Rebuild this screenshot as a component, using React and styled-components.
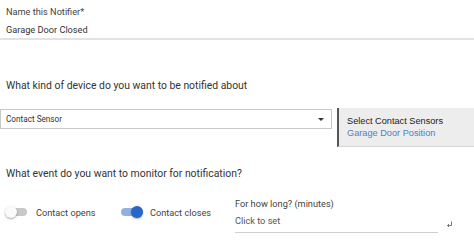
import React from "react";
import styled, { createGlobalStyle } from "styled-components";

const Global = createGlobalStyle`
  html, body { margin: 0; padding: 0; background: #fff; }
  body { font-family: Roboto, "Liberation Sans", sans-serif; color: #333; }
`;

const Page = styled.div`
  width: 474px;
  height: 241px;
  overflow: hidden;
  display: flex;
  flex-direction: column;
`;

const Field = styled.div`
  display: flex;
  flex-direction: column;
  padding: 6px 0 2px 6px;
  border-bottom: 2px solid #e2e2e2;
  margin-bottom: 39px;
`;

const FieldLabel = styled.div`
  font-size: 9.2px;
  color: #444;
  line-height: 12px;
`;

const FieldValue = styled.div`
  font-size: 9.2px;
  color: ${(p) => (p.$muted ? "#555" : "#333")};
  line-height: 12px;
  padding-top: ${(p) => (p.$tight ? 5 : 6)}px;
`;

const Heading = styled.div`
  font-size: 10.4px;
  color: #333;
  padding-left: 6px;
  line-height: 14px;
  margin-top: ${(p) => p.$mt || 0}px;
  margin-bottom: ${(p) => p.$mb || 0}px;
`;

const DeviceRow = styled.div`
  display: flex;
  align-items: flex-start;
  gap: 5px;
`;

const Select = styled.div`
  width: 332px;
  height: 20px;
  border: 1px solid #c8c8c8;
  box-sizing: border-box;
  margin-top: 1px;
  display: flex;
  align-items: center;
  justify-content: space-between;
  padding: 0 7px 0 5px;
  font-size: 8.2px;
  color: #333;
`;

const Caret = styled.span`
  width: 0;
  height: 0;
  border-left: 3px solid transparent;
  border-right: 3px solid transparent;
  border-top: 3px solid #333;
`;

const Picker = styled.div`
  flex: 1;
  height: 39px;
  background: #ededed;
  border-left: 2px solid #555;
  border-bottom: 1px solid #d4d4d4;
  box-sizing: border-box;
  padding: 7px 0 0 8px;
  font-family: "Liberation Sans", Arial, sans-serif;
  font-size: 9.2px;
  line-height: 12px;
`;

const PickerTitle = styled.div`
  color: #222;
`;

const PickerValue = styled.div`
  color: #4d7fc4;
`;

const EventRow = styled.div`
  display: grid;
  grid-template-columns: 114px 114px auto;
  align-items: start;
  padding-left: 7px;
  margin-top: 17px;
`;

const Toggle = styled.div`
  display: flex;
  align-items: center;
  gap: 9px;
  height: 12px;
  margin-top: 8px;
  font-size: 9.2px;
  color: #444;
`;

const Switch = styled.span`
  position: relative;
  width: 20px;
  height: 8px;
  border-radius: 4px;
  background: ${(p) => (p.$on ? "#8fb2e6" : "#c8c8c8")};
  flex: none;
  &::after {
    content: "";
    position: absolute;
    top: -2px;
    left: ${(p) => (p.$on ? "10px" : "-2px")};
    width: 12px;
    height: 12px;
    border-radius: 50%;
    background: ${(p) => (p.$on ? "#2467c9" : "#fafafa")};
    box-shadow: 0 1px 2px rgba(0, 0, 0, 0.35);
  }
`;

const Duration = styled.div`
  display: flex;
  align-items: flex-end;
`;

const DurationField = styled.div`
  width: 203px;
  display: flex;
  flex-direction: column;
  padding-bottom: 5px;
  border-bottom: 1px solid #cfcfcf;
`;

const Icon = styled.svg`
  margin-left: 8px;
  margin-bottom: 5px;
`;

export default function App() {
  return (
    <Page>
      <Global />
      <Field>
        <FieldLabel>Name this Notifier*</FieldLabel>
        <FieldValue>Garage Door Closed</FieldValue>
      </Field>
      <Heading $mb={15}>What kind of device do you want to be notified about</Heading>
      <DeviceRow>
        <Select>
          <span>Contact Sensor</span>
          <Caret />
        </Select>
        <Picker>
          <PickerTitle>Select Contact Sensors</PickerTitle>
          <PickerValue>Garage Door Position</PickerValue>
        </Picker>
      </DeviceRow>
      <Heading $mt={20}>What event do you want to monitor for notification?</Heading>
      <EventRow>
        <Toggle>
          <Switch />
          Contact opens
        </Toggle>
        <Toggle>
          <Switch $on />
          Contact closes
        </Toggle>
        <Duration>
          <DurationField>
            <FieldLabel>For how long? (minutes)</FieldLabel>
            <FieldValue $muted $tight>Click to set</FieldValue>
          </DurationField>
          <Icon width="7" height="7" viewBox="0 0 7 7">
            <path d="M5.5 0.5 V4.5 H1.5 M3 3 L1.5 4.5 L3 6" fill="none" stroke="#777" strokeWidth="1" />
          </Icon>
        </Duration>
      </EventRow>
    </Page>
  );
}
